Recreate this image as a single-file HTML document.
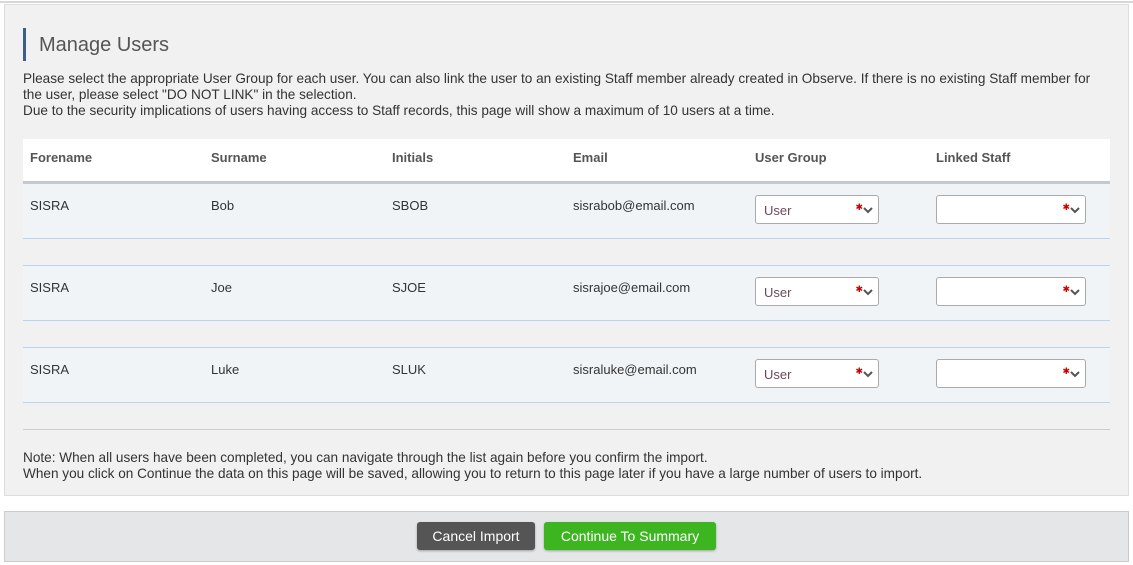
<!DOCTYPE html>
<html><head><style>
*{margin:0;padding:0;box-sizing:border-box}
body{width:1133px;height:565px;background:#fff;font-family:"Liberation Sans",sans-serif;color:#333;position:relative;overflow:hidden;font-size:13px}
.a{position:absolute}
.t{position:absolute;white-space:nowrap;line-height:16px}
.row{position:absolute;left:23px;width:1087px;background:#f0f4f7;border-bottom:1px solid #b8d4ee}
.sel{position:absolute;height:29px;background:#fff;border:1px solid #aaa;border-radius:3px}
.sel span{position:absolute;left:8px;top:7px;color:#6b4a5a;font-size:13px}
.sel i{position:absolute;right:15px;top:6px;color:#c00;font-style:normal;font-size:9px}
.sel svg{position:absolute;right:5px;top:11px}
.p{font-size:13.6px}
</style></head><body>
<div class="a" style="left:0;top:1px;width:1133px;height:2px;background:#d8d8d8"></div>
<div class="a" style="left:4px;top:4px;width:1125px;height:492px;background:#f1f1f1;border:1px solid #ddd"></div>
<div class="a" style="left:23px;top:28px;width:3px;height:33px;background:#3d5f86"></div>
<div class="t" style="left:39px;top:33px;font-size:20px;line-height:24px;color:#555">Manage Users</div>
<div class="t p" style="left:23px;top:71px">Please select the appropriate User Group for each user. You can also link the user to an existing Staff member already created in Observe. If there is no existing Staff member for</div>
<div class="t p" style="left:23px;top:87px">the user, please select "DO NOT LINK" in the selection.</div>
<div class="t p" style="left:23px;top:103px">Due to the security implications of users having access to Staff records, this page will show a maximum of 10 users at a time.</div>
<div class="a" style="left:23px;top:139px;width:1087px;height:42px;background:#fff"></div>
<div class="a" style="left:23px;top:181px;width:1087px;height:3px;background:#c3c9ce"></div>
<div class="t" style="left:30px;top:150px;font-weight:bold;color:#555">Forename</div>
<div class="t" style="left:211px;top:150px;font-weight:bold;color:#555">Surname</div>
<div class="t" style="left:392px;top:150px;font-weight:bold;color:#555">Initials</div>
<div class="t" style="left:573px;top:150px;font-weight:bold;color:#555">Email</div>
<div class="t" style="left:755px;top:150px;font-weight:bold;color:#555">User Group</div>
<div class="t" style="left:936px;top:150px;font-weight:bold;color:#555">Linked Staff</div>

<div class="row" style="top:184px;height:55px"></div>
<div class="a" style="left:23px;top:265px;width:1087px;height:1px;background:#b8d4ee"></div>
<div class="row" style="top:266px;height:55px"></div>
<div class="a" style="left:23px;top:347px;width:1087px;height:1px;background:#b8d4ee"></div>
<div class="row" style="top:348px;height:55px"></div>
<div class="a" style="left:23px;top:429px;width:1087px;height:1px;background:#ccc"></div>

<div class="t" style="left:30px;top:198px">SISRA</div><div class="t" style="left:211px;top:198px">Bob</div><div class="t" style="left:392px;top:198px">SBOB</div><div class="t" style="left:573px;top:198px">sisrabob@email.com</div>
<div class="t" style="left:30px;top:280px">SISRA</div><div class="t" style="left:211px;top:280px">Joe</div><div class="t" style="left:392px;top:280px">SJOE</div><div class="t" style="left:573px;top:280px">sisrajoe@email.com</div>
<div class="t" style="left:30px;top:362px">SISRA</div><div class="t" style="left:211px;top:362px">Luke</div><div class="t" style="left:392px;top:362px">SLUK</div><div class="t" style="left:573px;top:362px">sisraluke@email.com</div>

<div class="sel" style="left:755px;top:195px;width:124px"><span>User</span><i>✱</i><svg width="10" height="7"><path d="M1 1l4 4 4-4" stroke="#555" stroke-width="2" fill="none"/></svg></div>
<div class="sel" style="left:936px;top:195px;width:150px"><i>✱</i><svg width="10" height="7"><path d="M1 1l4 4 4-4" stroke="#555" stroke-width="2" fill="none"/></svg></div>
<div class="sel" style="left:755px;top:277px;width:124px"><span>User</span><i>✱</i><svg width="10" height="7"><path d="M1 1l4 4 4-4" stroke="#555" stroke-width="2" fill="none"/></svg></div>
<div class="sel" style="left:936px;top:277px;width:150px"><i>✱</i><svg width="10" height="7"><path d="M1 1l4 4 4-4" stroke="#555" stroke-width="2" fill="none"/></svg></div>
<div class="sel" style="left:755px;top:359px;width:124px"><span>User</span><i>✱</i><svg width="10" height="7"><path d="M1 1l4 4 4-4" stroke="#555" stroke-width="2" fill="none"/></svg></div>
<div class="sel" style="left:936px;top:359px;width:150px"><i>✱</i><svg width="10" height="7"><path d="M1 1l4 4 4-4" stroke="#555" stroke-width="2" fill="none"/></svg></div>

<div class="t p" style="left:23px;top:450px">Note: When all users have been completed, you can navigate through the list again before you confirm the import.</div>
<div class="t p" style="left:23px;top:466px">When you click on Continue the data on this page will be saved, allowing you to return to this page later if you have a large number of users to import.</div>

<div class="a" style="left:4px;top:511px;width:1125px;height:51px;background:#e4e6e7;border:1px solid #ccc"></div>
<div class="a" style="left:417px;top:522px;width:118px;height:28px;background:#555;border-radius:3px;color:#fff;font-size:14px;line-height:29px;text-align:center;box-shadow:0 1px 2px rgba(0,0,0,.3)">Cancel Import</div>
<div class="a" style="left:544px;top:522px;width:172px;height:28px;background:#3cb521;border-radius:3px;color:#fff;font-size:14px;line-height:29px;text-align:center;box-shadow:0 1px 2px rgba(0,0,0,.3)">Continue To Summary</div>
</body></html>
